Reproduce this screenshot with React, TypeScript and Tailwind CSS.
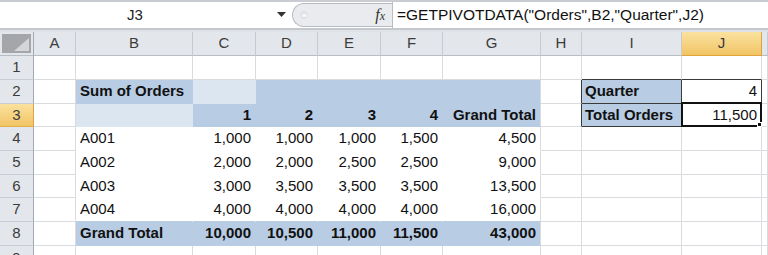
import React from "react";

type CellProps = { className?: string; children?: React.ReactNode };

const Cell = ({ className = "", children }: CellProps) => (
  <div className={"relative flex items-center overflow-hidden whitespace-nowrap border-r border-b " + className}>
    {children}
  </div>
);

const RH = "justify-center bg-[#e3e6ea] border-r-[#a3a9b0] border-b-[#c9cdd3] text-[#3c3c3c]";
const RHSEL = "justify-center bg-gradient-to-b from-[#fae29f] to-[#f2c464] border-r-[#d9a441] border-b-[#e0ad4a] text-[#3c3c3c]";
const GRID = "bg-white border-[#d9dbde]";
const WHITE = "bg-white border-white";
const WHITE_R = "bg-white border-b-white border-r-[#d9dbde]";
const DARK = "bg-[#b8cce4] border-[#b8cce4]";
const DARK_R = "bg-[#b8cce4] border-b-[#b8cce4] border-r-[#d9dbde]";
const LIGHT = "bg-[#dce6f1] border-[#dce6f1]";

const num = "justify-end pr-[4px]";

export default function App() {
  const dataRows = [
    ["A001", "1,000", "1,000", "1,000", "1,500", "4,500"],
    ["A002", "2,000", "2,000", "2,500", "2,500", "9,000"],
    ["A003", "3,000", "3,500", "3,500", "3,500", "13,500"],
    ["A004", "4,000", "4,000", "4,000", "4,000", "16,000"],
  ];

  return (
    <div
      className="w-[768px] h-[255px] overflow-hidden bg-white text-[15px] text-[#111]"
      style={{ fontFamily: '"Liberation Sans", Arial, sans-serif' }}
    >
      {/* Formula bar */}
      <div className="flex h-[30px] border-t-[2px] border-t-[#c9ccd0] border-b-[2px] border-b-[#c5c9ce] bg-white">
        <div className="flex w-[270px] items-center justify-center text-[#222]">J3</div>
        <div className="flex w-[22px] items-center justify-center">
          <svg width="9" height="6" viewBox="0 0 9 6">
            <path d="M0 0 L9 0 L4.5 5 Z" fill="#333" />
          </svg>
        </div>
        <div className="my-[1px] flex w-[100px] items-center rounded-l-[13px] border border-r-0 border-[#b9bdc2] bg-[#e9ebee]">
          <div className="ml-[7px] flex h-[8px] w-[8px] items-center justify-center rounded-full bg-[#dfe2e6]">
            <div className="h-[3px] w-[5px] rounded-full bg-[#f4f5f6]" />
          </div>
          <div
            className="ml-auto mr-[7px] text-[16px] italic text-[#333]"
            style={{ fontFamily: '"Liberation Serif", "Times New Roman", serif' }}
          >
            f<span className="text-[12px]">x</span>
          </div>
        </div>
        <div className="w-[1px] bg-[#b9bdc2]" />
        <div className="flex items-center pl-[4px] text-[15.5px] text-[#111]">
          =GETPIVOTDATA("Orders",B2,"Quarter",J2)
        </div>
      </div>
      <div className="h-[2px] bg-[#dfe2e6]" />

      {/* Grid */}
      <div className="grid grid-cols-[34px_42px_117px_63px_62px_63px_62px_98px_41px_100px_80px_6px] grid-rows-[24px_24px_24px_23px_24px_24px_23px_24px_24px_24px]">
        {/* Header row */}
        <div className="flex items-center justify-center border-r border-b border-r-[#a3a9b0] border-b-[#b8bdc4] bg-[#e3e6ea]">
          <div className="relative h-[19px] w-[29px] bg-[#a4a6a9]">
            <svg className="absolute bottom-[2px] right-[2px]" width="15" height="13" viewBox="0 0 15 13">
              <path d="M15 0 L15 13 L0 13 Z" fill="#d4d6d8" />
            </svg>
          </div>
        </div>
        {["A", "B", "C", "D", "E", "F", "G", "H", "I"].map((c) => (
          <Cell key={c} className="justify-center bg-[#e3e6ea] border-r-[#c7cbd1] border-b-[#b8bdc4] text-[#3c3c3c]">
            {c}
          </Cell>
        ))}
        <Cell className="justify-center bg-gradient-to-b from-[#fae29f] to-[#f2c464] border-r-[#d9a441] border-b-[#e0a33a] text-[#3c3c3c]">
          J
        </Cell>
        <Cell className="bg-[#e3e6ea] border-r-[#c7cbd1] border-b-[#b8bdc4]" />

        {/* Row 1 */}
        <Cell className={RH}>1</Cell>
        <Cell className={GRID} />
        <Cell className={GRID} />
        <Cell className={GRID} />
        <Cell className={GRID} />
        <Cell className={GRID} />
        <Cell className={GRID} />
        <Cell className={GRID} />
        <Cell className={GRID} />
        <Cell className="bg-white border-r-[#d9dbde] border-b-[#3a3a3a]" />
        <Cell className="bg-white border-r-[#d9dbde] border-b-[#3a3a3a]" />
        <Cell className={GRID} />

        {/* Row 2 */}
        <Cell className={RH}>2</Cell>
        <Cell className={GRID} />
        <Cell className={DARK + " pl-[4px] font-bold"}>Sum of Orders</Cell>
        <Cell className={LIGHT} />
        <Cell className={DARK} />
        <Cell className={DARK} />
        <Cell className={DARK} />
        <Cell className={DARK_R} />
        <Cell className="bg-white border-b-[#d9dbde] border-r-[#3a3a3a]" />
        <Cell className="bg-[#b8cce4] border-[#3a3a3a] pl-[3px] font-bold">Quarter</Cell>
        <Cell className={"bg-white border-[#3a3a3a] " + num}>4</Cell>
        <Cell className={GRID} />

        {/* Row 3 */}
        <Cell className={RHSEL}>3</Cell>
        <Cell className={GRID} />
        <Cell className={LIGHT} />
        <Cell className={DARK + " " + num + " font-bold"}>1</Cell>
        <Cell className={DARK + " " + num + " font-bold"}>2</Cell>
        <Cell className={DARK + " " + num + " font-bold"}>3</Cell>
        <Cell className={DARK + " " + num + " font-bold"}>4</Cell>
        <Cell className={DARK_R + " " + num + " font-bold"}>Grand Total</Cell>
        <Cell className="bg-white border-b-[#d9dbde] border-r-[#3a3a3a]" />
        <Cell className="bg-[#b8cce4] border-[#3a3a3a] pl-[3px] font-bold">Total Orders</Cell>
        <div className="relative flex items-center justify-end border-r border-b border-[#3a3a3a] bg-white pr-[4px]">
          11,500
          <div className="pointer-events-none absolute -left-[1px] -top-[2px] bottom-[-1px] right-[-1px] border-2 border-[#111]" />
          <div className="absolute -bottom-[1px] -right-[1px] h-[5px] w-[5px] border border-white bg-[#111]" />
        </div>
        <Cell className={GRID} />

        {/* Rows 4-7 */}
        {dataRows.map((r, i) => {
          const last = i === dataRows.length - 1;
          const inner = last ? "bg-white border-r-white border-b-[#b8cce4]" : WHITE;
          const innerR = last ? "bg-white border-r-[#d9dbde] border-b-[#b8cce4]" : WHITE_R;
          return (
            <React.Fragment key={r[0]}>
              <Cell className={RH}>{i + 4}</Cell>
              <Cell className={GRID} />
              <Cell className={inner + " pl-[4px]"}>{r[0]}</Cell>
              <Cell className={inner + " " + num}>{r[1]}</Cell>
              <Cell className={inner + " " + num}>{r[2]}</Cell>
              <Cell className={inner + " " + num}>{r[3]}</Cell>
              <Cell className={inner + " " + num}>{r[4]}</Cell>
              <Cell className={innerR + " " + num}>{r[5]}</Cell>
              <Cell className={GRID} />
              <Cell className={GRID} />
              <Cell className={GRID} />
              <Cell className={GRID} />
            </React.Fragment>
          );
        })}

        {/* Row 8 */}
        <Cell className={RH}>8</Cell>
        <Cell className={GRID} />
        <Cell className={DARK + " pl-[4px] font-bold"}>Grand Total</Cell>
        <Cell className={DARK + " " + num + " font-bold"}>10,000</Cell>
        <Cell className={DARK + " " + num + " font-bold"}>10,500</Cell>
        <Cell className={DARK + " " + num + " font-bold"}>11,000</Cell>
        <Cell className={DARK + " " + num + " font-bold"}>11,500</Cell>
        <Cell className={DARK_R + " " + num + " font-bold"}>43,000</Cell>
        <Cell className={GRID} />
        <Cell className={GRID} />
        <Cell className={GRID} />
        <Cell className={GRID} />

        {/* Row 9 */}
        <Cell className={RH + " items-start pt-[1px]"}>9</Cell>
        <Cell className={GRID} />
        <Cell className={GRID} />
        <Cell className={GRID} />
        <Cell className={GRID} />
        <Cell className={GRID} />
        <Cell className={GRID} />
        <Cell className={GRID} />
        <Cell className={GRID} />
        <Cell className={GRID} />
        <Cell className={GRID} />
        <Cell className={GRID} />
      </div>
    </div>
  );
}
